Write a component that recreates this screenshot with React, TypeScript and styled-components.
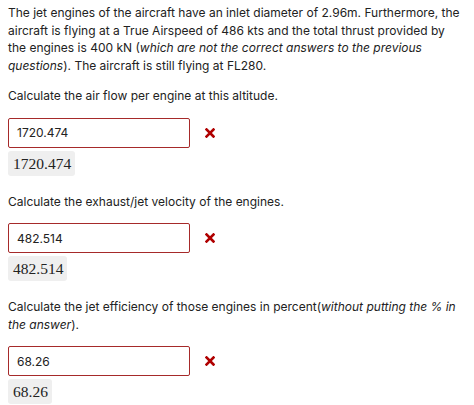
import React from 'react';
import styled, {createGlobalStyle} from "styled-components";

const GlobalStyle = createGlobalStyle`
  body {
    margin: 0;
    background: #ffffff;
    font-family: Inter, "Noto Sans", sans-serif;
    color: #222222;
  }
`

type QuestionType = {
    prompt: React.ReactNode;
    value: string;
}

const questions: QuestionType[] = [
    {prompt: "Calculate the air flow per engine at this altitude.", value: "1720.474"},
    {prompt: "Calculate the exhaust/jet velocity of the engines.", value: "482.514"},
    {
        prompt: <>Calculate the jet efficiency of those engines in percent(<em>without putting the % in
            the answer</em>).</>,
        value: "68.26"
    },
];

const CrossIcon = () => (
    <svg width="10" height="10" viewBox="0 0 10 10">
        <path d="M1.5 1.5 L8.5 8.5 M8.5 1.5 L1.5 8.5" stroke="#b00000" strokeWidth="2.6" strokeLinecap="square"/>
    </svg>
);

export default function App() {
    return (
        <Page>
            <GlobalStyle/>
            <Text>
                The jet engines of the aircraft have an inlet diameter of 2.96m. Furthermore, the
                aircraft is flying at a True Airspeed of 486 kts and the total thrust provided by
                the engines is 400 kN (<em>which are not the correct answers to the previous
                questions</em>). The aircraft is still flying at FL280.
            </Text>
            {questions.map((q, i) => (
                <Question key={i}>
                    <Text>{q.prompt}</Text>
                    <AnswerRow>
                        <Input readOnly value={q.value}/>
                        <Mark><CrossIcon/></Mark>
                    </AnswerRow>
                    <Correct>{q.value}</Correct>
                </Question>
            ))}
        </Page>
    );
}

const Page = styled.div`
  padding: 4px 8px 0;
  display: flex;
  flex-direction: column;
`

const Text = styled.p`
  margin: 0;
  font-size: 12px;
  line-height: 17.5px;
  color: #222;

  em {
    font-style: italic;
  }
`

const Question = styled.div`
  display: flex;
  flex-direction: column;
  margin-top: 13px;

  & + & {
    margin-top: 17px;
  }
`

const AnswerRow = styled.div`
  display: flex;
  align-items: center;
  margin-top: 13px;
`

const Input = styled.input`
  box-sizing: border-box;
  width: 182px;
  height: 30px;
  margin: 0;
  border: 1px solid #a62a2a;
  border-radius: 2px;
  padding: 0 8px;
  font-family: Inter, "Noto Sans", sans-serif;
  font-size: 12px;
  color: #222;
  outline: none;
`

const Mark = styled.span`
  display: flex;
  margin-left: 15px;
`

const Correct = styled.span`
  align-self: flex-start;
  margin-top: 3px;
  padding: 4px 4px 4px 5px;
  background: #efefef;
  border-radius: 3px;
  font-family: "Liberation Serif", "DejaVu Serif", serif;
  font-size: 15.5px;
  line-height: 17px;
  color: #222;
`
